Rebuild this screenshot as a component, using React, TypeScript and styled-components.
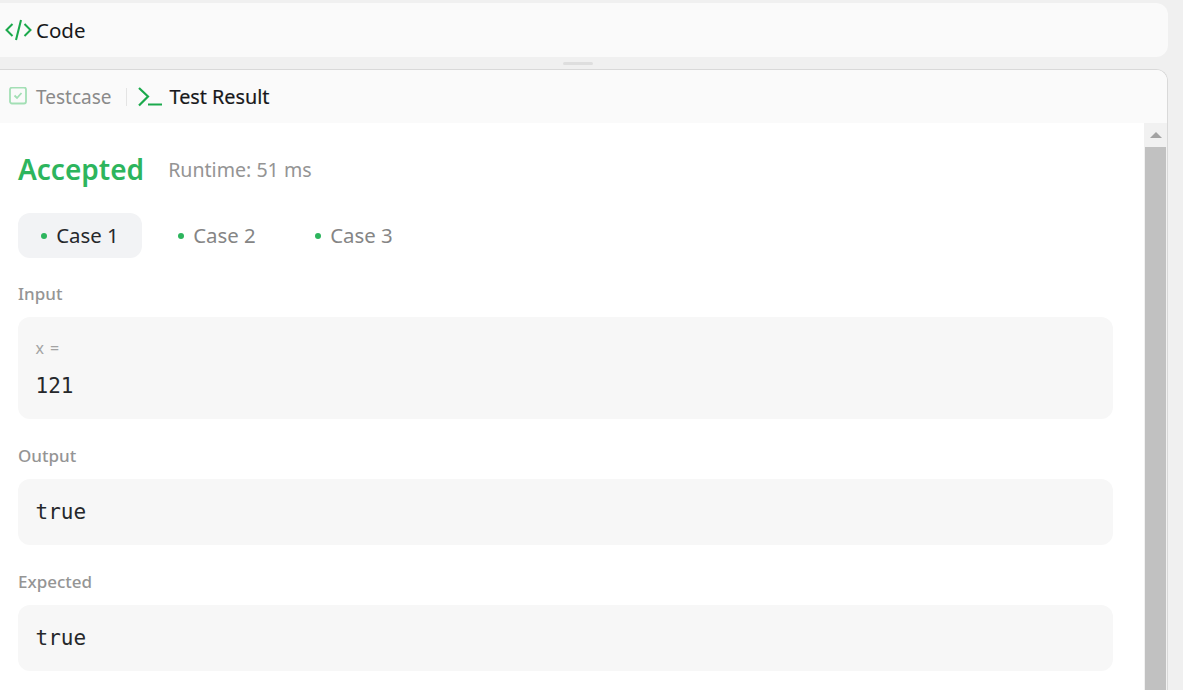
import styled, { createGlobalStyle } from "styled-components";
import * as React from "react";

const GlobalStyle = createGlobalStyle`
  html, body {
    margin: 0;
    padding: 0;
    height: 690px;
    overflow: hidden;
    background: #f0f0f0;
    font-family: "Noto Sans", "Open Sans", sans-serif;
  }
`;

const Page = styled.div`
  width: 1183px;
  height: 690px;
  padding: 3px 15px 0 0;
  box-sizing: border-box;
  display: flex;
  flex-direction: column;
  overflow: hidden;
`;

const CodeBar = styled.div`
  height: 54px;
  flex: none;
  background: #fafafa;
  border-radius: 0 12px 12px 0;
  display: flex;
  align-items: center;
  padding-left: 5px;
  gap: 4px;
  font-size: 20.5px;
  color: #17181a;
  box-sizing: border-box;
`;

const Splitter = styled.div`
  height: 12px;
  flex: none;
  display: flex;
  justify-content: center;
  align-items: center;
  padding-right: 12px;
`;

const Handle = styled.div`
  width: 30px;
  height: 3px;
  border-radius: 2px;
  background: #dedede;
`;

const ResultPanel = styled.div`
  flex: 1;
  min-height: 0;
  border-top: 1px solid #d9d9d9;
  border-right: 1px solid #d9d9d9;
  border-radius: 0 12px 0 0;
  display: flex;
  flex-direction: column;
  background: #fff;
  overflow: hidden;
`;

const Tabs = styled.div`
  height: 53px;
  flex: none;
  background: #fafafa;
  display: flex;
  align-items: center;
  padding-left: 9px;
  box-sizing: border-box;
`;

const Tab = styled.div<{ $active?: boolean }>`
  display: flex;
  align-items: center;
  font-size: ${({ $active }) => ($active ? "19.8px" : "19px")};
  color: ${({ $active }) => ($active ? "#17181a" : "#8a8a8a")};
  -webkit-text-stroke: ${({ $active }) => ($active ? "0.2px" : "0")};
`;

const TabDivider = styled.div`
  width: 1px;
  height: 18px;
  background: #e4e4e4;
  margin: 0 11px 0 14px;
`;

const Body = styled.div`
  flex: 1;
  min-height: 0;
  display: flex;
`;

const Content = styled.div`
  flex: 1;
  padding: 25px 31px 0 18px;
  min-width: 0;
`;

const Status = styled.div`
  display: flex;
  align-items: center;
  gap: 24px;
  height: 43px;
  margin-bottom: -2px;
`;

const Accepted = styled.span`
  font-size: 28px;
  line-height: 43px;
  font-weight: 600;
  color: #2db55d;
`;

const Runtime = styled.span`
  font-size: 19.6px;
  color: #949494;
  padding-bottom: 1px;
`;

const CaseRow = styled.div`
  display: flex;
  gap: 13px;
  margin-top: 24px;
`;

const CaseTab = styled.div<{ $active?: boolean }>`
  width: 124px;
  height: 45px;
  padding-bottom: 2px;
  box-sizing: border-box;
  border-radius: 12px;
  background: ${({ $active }) => ($active ? "#f2f3f5" : "transparent")};
  color: ${({ $active }) => ($active ? "#26282b" : "#858585")};
  font-size: 20.4px;
  display: flex;
  align-items: center;
  justify-content: center;
  gap: 9px;
`;

const Dot = styled.span`
  width: 6px;
  height: 6px;
  border-radius: 50%;
  background: #2db55d;
  margin-top: 2px;
`;

const FieldLabel = styled.div`
  font-size: 17px;
  font-weight: 500;
  line-height: 24px;
  color: #959595;
  margin-top: 25px;
`;

const FirstLabel = styled(FieldLabel)`
  margin-top: 24px;
`;

const ValueBox = styled.div`
  margin-top: 11px;
  background: #f7f7f7;
  border-radius: 12px;
  padding: 20px 17.5px;
  font-family: "DejaVu Sans Mono", "Liberation Mono", monospace;
  font-size: 21px;
  line-height: 26px;
  color: #26282b;
`;

const InputBox = styled(ValueBox)`
  padding: 22px 17.5px 20px;
  height: 102px;
  box-sizing: border-box;
`;

const VarName = styled.div`
  font-family: "Noto Sans", sans-serif;
  font-size: 16px;
  line-height: 18px;
  color: #a3a3a3;
  margin-bottom: 16px;
  letter-spacing: 1px;
`;

const Scrollbar = styled.div`
  width: 23px;
  flex: none;
  background: #f1f1f1;
  display: flex;
  flex-direction: column;
  align-items: center;
`;

const ArrowButton = styled.div`
  height: 24px;
  flex: none;
  display: flex;
  align-items: center;
  justify-content: center;
`;

const Arrow = styled.div`
  width: 0;
  height: 0;
  border-left: 6px solid transparent;
  border-right: 6px solid transparent;
  border-bottom: 6px solid #a3a3a3;
`;

const Thumb = styled.div`
  width: 21px;
  flex: 1;
  background: #c1c1c1;
`;

const CodeIcon = () => (
  <svg width="27" height="24" viewBox="0 0 27 24" fill="none" stroke="#1ba94c" strokeWidth="2">
    <path d="M7.5 6 L1.5 12 L7.5 18" />
    <path d="M19.5 6 L25.5 12 L19.5 18" />
    <path d="M16 2 L11 22" />
  </svg>
);

const CheckIcon = () => (
  <svg width="18" height="20" viewBox="0 0 18 20" fill="none" stroke="#a3dfb5" strokeWidth="1.8">
    <rect x="1" y="0.5" width="16" height="16" rx="2" />
    <path d="M5.5 8.5 L8 11 L12.5 6" />
  </svg>
);

const TerminalIcon = () => (
  <svg width="24" height="20" viewBox="0 0 24 20" fill="none" stroke="#1ba94c" strokeWidth="2.2">
    <path d="M1 1 L10 9.5 L1 18.5" />
    <path d="M10 17.5 L24 17.5" />
  </svg>
);

const TestcaseLabel = styled.span`
  margin-left: 9px;
`;

const ResultLabel = styled.span`
  margin-left: 8px;
`;

const App: React.FC = () => {
  return (
    <>
      <GlobalStyle />
      <Page>
        <CodeBar>
          <CodeIcon />
          <span>Code</span>
        </CodeBar>
        <Splitter>
          <Handle />
        </Splitter>
        <ResultPanel>
          <Tabs>
            <Tab>
              <CheckIcon />
              <TestcaseLabel>Testcase</TestcaseLabel>
            </Tab>
            <TabDivider />
            <Tab $active>
              <TerminalIcon />
              <ResultLabel>Test Result</ResultLabel>
            </Tab>
          </Tabs>
          <Body>
            <Content>
              <Status>
                <Accepted>Accepted</Accepted>
                <Runtime>Runtime: 51 ms</Runtime>
              </Status>
              <CaseRow>
                <CaseTab $active><Dot />Case 1</CaseTab>
                <CaseTab><Dot />Case 2</CaseTab>
                <CaseTab><Dot />Case 3</CaseTab>
              </CaseRow>
              <FirstLabel>Input</FirstLabel>
              <InputBox>
                <VarName>x =</VarName>
                121
              </InputBox>
              <FieldLabel>Output</FieldLabel>
              <ValueBox>true</ValueBox>
              <FieldLabel>Expected</FieldLabel>
              <ValueBox>true</ValueBox>
            </Content>
            <Scrollbar>
              <ArrowButton><Arrow /></ArrowButton>
              <Thumb />
            </Scrollbar>
          </Body>
        </ResultPanel>
      </Page>
    </>
  );
};

export default App;
